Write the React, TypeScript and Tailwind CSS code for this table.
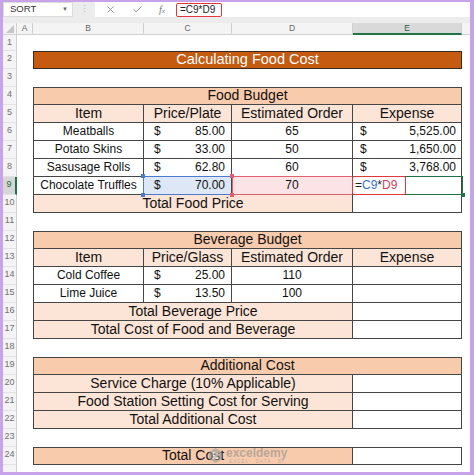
import React from 'react';
import clsx from 'clsx';
import { X, Check } from 'lucide-react';

const B = 'w-[111px]';
const C = 'w-[88px]';
const D = 'w-[121px]';
const E = 'w-[109px]';
const SPAN3 = 'w-[320px]';
const SPAN4 = 'w-[429px]';

const HEAD = 'bg-[#f8cbad]';
const SUB = 'bg-[#fce4d6]';

function SheetRow({ n, active, short, children }: { n: number; active?: boolean; short?: boolean; children?: React.ReactNode }) {
  return (
    <div className={clsx('flex shrink-0', short ? 'h-[15.5px]' : 'h-[18px]')}>
      <div
        className={clsx(
          'w-[14px] shrink-0 flex items-center justify-center text-[9px] border-b border-b-[#e2e2e2]',
          active
            ? 'bg-[#d6d6d6] text-[#1d6a3a] border-r-2 border-r-[#217346]'
            : 'bg-[#f4f4f4] text-[#707070] border-r border-r-[#d0d0d0]'
        )}
      >
        {n}
      </div>
      <div className="w-[16px] shrink-0" />
      <div className="flex h-full">{children}</div>
    </div>
  );
}

function Cell({
  w,
  bg = 'bg-white',
  first,
  top,
  className,
  children,
}: {
  w: string;
  bg?: string;
  first?: boolean;
  top?: boolean;
  className?: string;
  children?: React.ReactNode;
}) {
  return (
    <div
      className={clsx(
        w,
        bg,
        'relative h-full shrink-0 flex items-center border-r border-b border-[#454545] text-[#111]',
        first && 'border-l',
        top && 'border-t',
        className
      )}
    >
      {children}
    </div>
  );
}

function Money({ w, v, className, bg }: { w: string; v: string; className?: string; bg?: string }) {
  return (
    <Cell w={w} bg={bg} className={clsx('justify-between text-[12px]', className)}>
      <span>$</span>
      <span>{v}</span>
    </Cell>
  );
}

function HeaderRow({ n, price }: { n: number; price: string }) {
  return (
    <SheetRow n={n}>
      <Cell w={B} bg={SUB} first className="justify-center text-[14px]">Item</Cell>
      <Cell w={C} bg={SUB} className="justify-center text-[14px]">{price}</Cell>
      <Cell w={D} bg={SUB} className="justify-center text-[14px]">Estimated Order</Cell>
      <Cell w={E} bg={SUB} className="justify-center text-[14px]">Expense</Cell>
    </SheetRow>
  );
}

function DataRow({ n, item, price, qty, expense }: { n: number; item: string; price: string; qty: string; expense?: string }) {
  return (
    <SheetRow n={n}>
      <Cell w={B} first className="justify-center text-[12px]">{item}</Cell>
      <Money w={C} v={price} className="pl-[10px] pr-[6px]" />
      <Cell w={D} className="justify-center text-[12px]">{qty}</Cell>
      {expense ? <Money w={E} v={expense} className="pl-[7px] pr-[5px]" /> : <Cell w={E} />}
    </SheetRow>
  );
}

function TitleRow({ n, text }: { n: number; text: string }) {
  return (
    <SheetRow n={n}>
      <Cell w={SPAN4} bg={HEAD} first top className="justify-center text-[14px]">{text}</Cell>
    </SheetRow>
  );
}

function TotalRow({ n, text, top, bg = SUB }: { n: number; text: string; top?: boolean; bg?: string }) {
  return (
    <SheetRow n={n}>
      <Cell w={SPAN3} bg={bg} first top={top} className="justify-center text-[14px]">{text}</Cell>
      <Cell w={E} top={top} />
    </SheetRow>
  );
}

function FormulaBar() {
  return (
    <div className="flex h-[15px] shrink-0 bg-[#ececec] text-[#333]">
      <div className="w-[70px] bg-white border border-[#dcdcdc] flex items-center justify-between pl-[6px] pr-[4px] text-[9.5px]">
        <span>SORT</span>
        <span className="text-[6px] text-[#666]">▼</span>
      </div>
      <div className="w-[22px] flex items-center justify-center text-[9px] text-[#b5b5b5]">⋮</div>
      <div className="flex-1 bg-white flex items-center">
        <div className="w-[78px] flex items-center justify-around text-[#777] pl-[2px]">
          <X size={11} strokeWidth={1.6} />
          <Check size={11} strokeWidth={1.8} />
          <span className="font-['Liberation_Serif',serif] italic text-[10px] leading-none">
            f<span className="text-[7px]">x</span>
          </span>
        </div>
        <div className="ml-[3px] h-[14px] w-[46px] border-[1.5px] border-[#e2363b] rounded-[2px] flex items-center pl-[3px] text-[10px] text-[#222]">
          =C9*D9
        </div>
      </div>
    </div>
  );
}

function ColumnHeaders() {
  const cols: [string, string][] = [
    ['A', 'w-[16px]'],
    ['B', B],
    ['C', C],
    ['D', D],
  ];
  return (
    <div className="flex h-[12px] shrink-0 bg-[#f4f4f4] text-[8.5px] text-[#666]">
      <div className="w-[14px] shrink-0 relative border-r border-b border-[#d0d0d0]">
        <svg className="absolute right-[2px] bottom-[1px]" width="8" height="8" viewBox="0 0 8 8">
          <path d="M8 0 L8 8 L0 8 Z" fill="#c4c4c4" />
        </svg>
      </div>
      {cols.map(([l, w]) => (
        <div key={l} className={clsx(w, 'shrink-0 flex items-center justify-center border-r border-b border-[#d0d0d0]')}>
          {l}
        </div>
      ))}
      <div className={clsx(E, 'shrink-0 flex items-center justify-center bg-[#d9d9d9] border-r border-r-[#d0d0d0] border-b-2 border-b-[#217346] text-[#2b5e3d]')}>
        E
      </div>
      <div className="flex-1 border-b border-[#d0d0d0]" />
    </div>
  );
}

function Corner({ className }: { className: string }) {
  return <div className={clsx('absolute w-[4px] h-[4px] z-10', className)} />;
}

export default function App() {
  return (
    <div className="w-[474px] h-[475px] bg-[#c9a3ea] pl-[3px] pr-[4px] pt-[2px] pb-[3px] overflow-hidden font-['Liberation_Sans',Arial,sans-serif]">
      <div className="relative h-full bg-white flex flex-col overflow-hidden">
        <FormulaBar />
        <div className="h-[6px] shrink-0 bg-[#ececec]" />
        <ColumnHeaders />

        <SheetRow n={1} short />
        <SheetRow n={2}>
          <div className="w-[429px] h-full bg-[#c55a11] border-[1.5px] border-[#3d2a1c] flex items-center justify-center text-white text-[14.5px]">
            Calculating Food Cost
          </div>
        </SheetRow>
        <SheetRow n={3} />

        <TitleRow n={4} text="Food Budget" />
        <HeaderRow n={5} price="Price/Plate" />
        <DataRow n={6} item="Meatballs" price="85.00" qty="65" expense="5,525.00" />
        <DataRow n={7} item="Potato Skins" price="33.00" qty="50" expense="1,650.00" />
        <DataRow n={8} item="Sasusage Rolls" price="62.80" qty="60" expense="3,768.00" />
        <SheetRow n={9} active>
          <Cell w={B} first className="justify-center text-[12px]">Chocolate Truffles</Cell>
          <Money w={C} v="70.00" bg="bg-[#dde7f6]" className="pl-[10px] pr-[6px]" />
          <Cell w={D} bg="bg-[#fbe3e6]" className="justify-center text-[12px]">70</Cell>
          <Cell w={E} />
        </SheetRow>
        <TotalRow n={10} text="Total Food Price" />
        <SheetRow n={11} />

        <TitleRow n={12} text="Beverage Budget" />
        <HeaderRow n={13} price="Price/Glass" />
        <DataRow n={14} item="Cold Coffee" price="25.00" qty="110" />
        <DataRow n={15} item="Lime Juice" price="13.50" qty="100" />
        <TotalRow n={16} text="Total Beverage Price" />
        <TotalRow n={17} text="Total Cost of Food and Beverage" />
        <SheetRow n={18} />

        <TitleRow n={19} text="Additional Cost" />
        <TotalRow n={20} text="Service Charge (10% Applicable)" />
        <TotalRow n={21} text="Food Station Setting Cost for Serving" />
        <TotalRow n={22} text="Total Additional Cost" />
        <SheetRow n={23} />
        <TotalRow n={24} text="Total Cost" top bg={HEAD} />

        <div className="flex-1 flex">
          <div className="w-[14px] bg-[#f4f4f4] border-r border-[#d0d0d0]" />
        </div>

        {/* selection outlines for row 9 */}
        <div className="absolute left-[140px] top-[173.5px] w-[90px] h-[19.5px] border-[1.5px] border-[#4a7bd0] pointer-events-none">
          <Corner className="-left-[3px] -top-[3px] bg-[#4a7bd0]" />
          <Corner className="-left-[3px] -bottom-[3px] bg-[#4a7bd0]" />
        </div>
        <div className="absolute left-[229px] top-[173.5px] w-[121px] h-[19.5px] border-[1.5px] border-[#e0606e] pointer-events-none">
          <Corner className="-left-[3px] -top-[3px] bg-[#e0606e]" />
          <Corner className="-left-[3px] -bottom-[3px] bg-[#e0606e]" />
        </div>
        <div className="absolute left-[349px] top-[173.5px] w-[111px] h-[19.5px] border-[1.5px] border-[#217346] pointer-events-none">
          <Corner className="-right-[3px] -bottom-[3px] bg-[#217346]" />
        </div>
        <div className="absolute left-[349px] top-[173.5px] w-[54px] h-[19.5px] border-[1.5px] border-[#e2363b] rounded-[2px] flex items-center pl-[2px] text-[12px] pointer-events-none">
          <span className="text-[#222]">=</span>
          <span className="text-[#3b6fcf]">C9</span>
          <span className="text-[#222]">*</span>
          <span className="text-[#d4405a]">D9</span>
        </div>

        {/* watermark */}
        <div className="absolute left-[205px] top-[445px] flex items-center gap-[3px] opacity-60 pointer-events-none">
          <svg width="15" height="17" viewBox="0 0 16 18">
            <path d="M8 1 L15 5 L15 13 L8 17 L1 13 L1 5 Z" fill="#9a9a9a" />
            <path d="M5 6 L11 6 M5 9 L10 9 M5 12 L11 12" stroke="#fff" strokeWidth="1.5" />
          </svg>
          <div className="flex flex-col items-center leading-none">
            <span className="text-[12px] font-bold text-[#8f8f8f]">exceldemy</span>
            <span className="text-[4.5px] tracking-[1px] text-[#9a9a9a] mt-[1px]">EXCEL · DATA · BI</span>
          </div>
        </div>
      </div>
    </div>
  );
}
